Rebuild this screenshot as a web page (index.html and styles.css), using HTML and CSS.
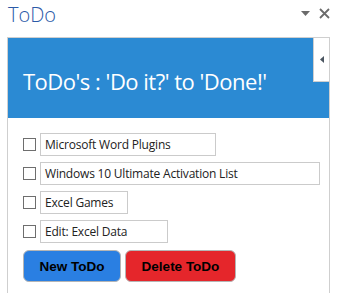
FILE: index.html
```html
<!DOCTYPE html>
<html>
<head>
<meta charset="utf-8">
<link rel="stylesheet" href="styles.css">
</head>
<body>
<div class="titlebar">
  <div class="title">ToDo</div>
  <div class="controls">
    <svg class="drop" width="9" height="5" viewBox="0 0 9 5"><path d="M0 0H9L4.5 5Z" fill="#6b6b6b"/></svg>
    <svg class="close" width="11" height="11" viewBox="0 0 11 11"><path d="M1 1L10 10M10 1L1 10" stroke="#6b6b6b" stroke-width="1.8"/></svg>
  </div>
</div>
<div class="panel">
  <div class="header">
    <h1 class="heading">ToDo's : 'Do it?' to 'Done!'</h1>
    <div class="tab"><svg width="4" height="7" viewBox="0 0 4 7"><path d="M4 0V7L0 3.5Z" fill="#4a5560"/></svg></div>
  </div>
  <div class="content">
    <div class="row"><span class="check"></span><div class="field w1">Microsoft Word Plugins</div></div>
    <div class="row"><span class="check"></span><div class="field w2">Windows 10 Ultimate Activation List</div></div>
    <div class="row"><span class="check"></span><div class="field w3">Excel Games</div></div>
    <div class="row"><span class="check"></span><div class="field w4">Edit: Excel Data</div></div>
    <div class="buttons">
      <button class="btn new">New ToDo</button>
      <button class="btn del">Delete ToDo</button>
    </div>
  </div>
</div>
</body>
</html>
```
FILE: styles.css
```css
html, body {
  margin: 0;
  padding: 0;
  background: #fff;
  width: 337px;
  height: 293px;
  overflow: hidden;
  font-family: "Open Sans", "Noto Sans", sans-serif;
}
.titlebar {
  height: 37px;
  display: flex;
  justify-content: space-between;
  align-items: flex-start;
}
.title {
  margin-left: 8px;
  margin-top: 1px;
  font-size: 20px;
  line-height: 28px;
  color: #2b5aa8;
  font-weight: 300;
}
.controls {
  display: flex;
  align-items: center;
  gap: 9px;
  margin-top: 8px;
  margin-right: 7px;
}
.panel {
  margin-left: 7px;
  width: 321px;
  height: 256px;
  border: 1px solid #cfcfcf;
  border-bottom: none;
}
.header {
  position: relative;
  height: 80px;
  background: #2b8ad3;
  display: flex;
  align-items: flex-end;
  padding-left: 15px;
}
.heading {
  margin: 0 0 22px 0;
  font-size: 22px;
  line-height: 30px;
  font-weight: 400;
  letter-spacing: -0.5px;
  color: #fff;
}
.tab {
  position: absolute;
  right: 0;
  top: 0;
  width: 15px;
  height: 43px;
  background: #fff;
  border-left: 1px solid #cfcfcf;
  border-bottom: 1px solid #cfcfcf;
  display: flex;
  align-items: center;
  justify-content: center;
}
.content {
  padding: 15px 0 0 15px;
  display: flex;
  flex-direction: column;
  gap: 6px;
}
.row {
  display: flex;
  align-items: center;
  gap: 4px;
  height: 23px;
}
.check {
  width: 11px;
  height: 11px;
  border: 1px solid #6e6e6e;
  background: #fff;
}
.field {
  box-sizing: border-box;
  height: 23px;
  border: 1px solid #cbcbcb;
  padding: 0 4px;
  font-size: 12px;
  letter-spacing: -0.2px;
  line-height: 21px;
  color: #222;
  white-space: nowrap;
  overflow: hidden;
}
.w1 { width: 176px; }
.w2 { width: 280px; }
.w3 { width: 88px; }
.w4 { width: 128px; }
.buttons {
  display: flex;
  gap: 4px;
  margin-top: 1px;
}
.btn {
  box-sizing: border-box;
  height: 32px;
  border: 1px solid #b5b5b5;
  border-radius: 6px;
  font-family: "Liberation Sans", Arial, sans-serif;
  font-weight: bold;
  font-size: 13.5px;
  color: #000;
  padding: 0;
}
.new { width: 98px; background: #2a7fe2; }
.del { width: 111px; background: #e5262b; }
```
